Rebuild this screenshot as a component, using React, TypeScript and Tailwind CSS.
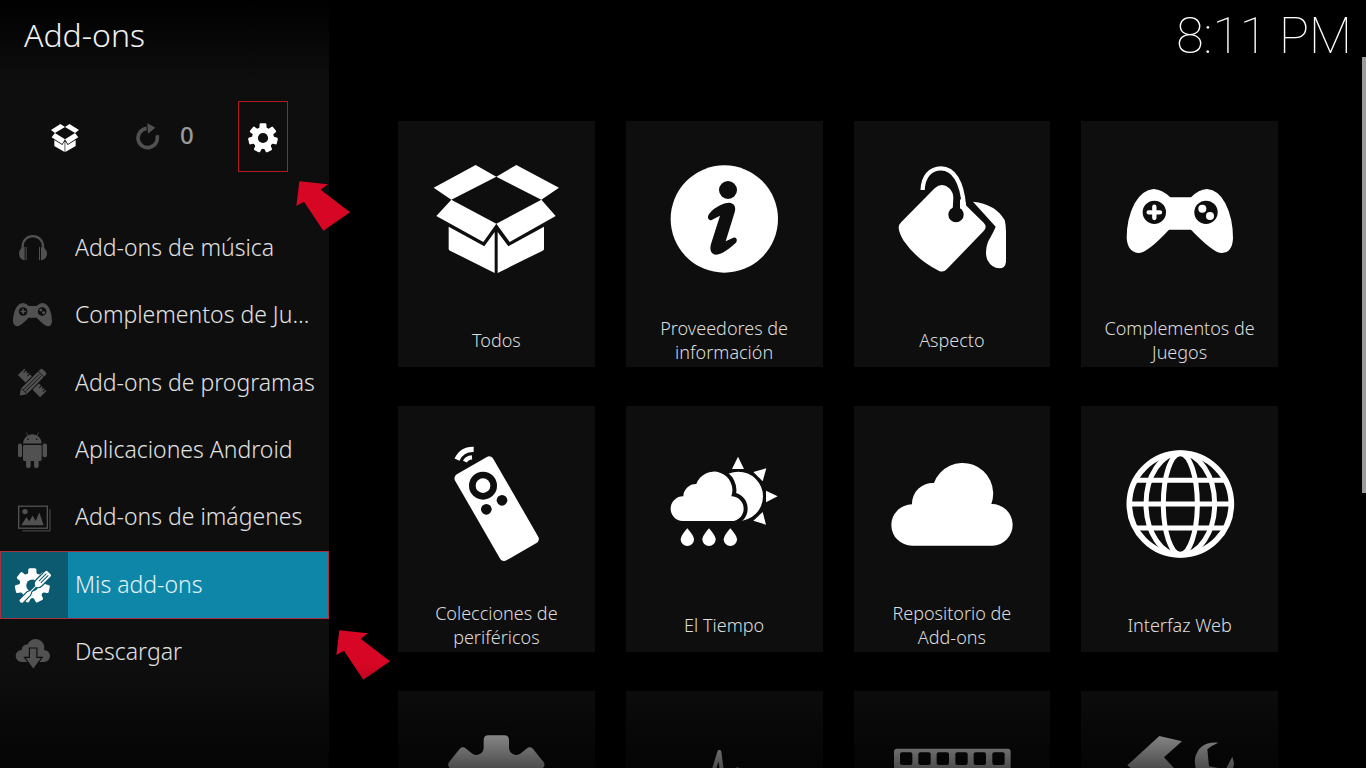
import type { ReactNode } from "react";

const PANEL = "#0e0e0e";

function Gear({ cx, cy, r, hole = PANEL }: { cx: number; cy: number; r: number; hole?: string }) {
  const scale = r / 161;
  return (
    <g transform={`translate(${cx} ${cy}) scale(${scale})`}>
      <circle r="116" />
      {[0, 1, 2, 3, 4, 5, 6].map((n) => (
        <path
          key={n}
          transform={`rotate(${(n * 360) / 7})`}
          d="M-38-146Q-38-161-24-161H24Q38-161 38-146V-122Q40-104 60-100V-60H-60V-100Q-40-104-38-122Z"
        />
      ))}
      <circle r="56" fill={hole} />
    </g>
  );
}

function BoxShape() {
  return (
    <g strokeLinejoin="round">
      <path d="M132 233 258 165 320 200 185 269ZM320 200 380 165 508 233 455 269ZM185 269 320 341 281 396 140 318ZM455 269 498 318 360 396 320 341Z" />
      <path d="M177 350 284 409 315 366V489L181 422Q177 420 177 416ZM324 366 356 409 463 350V416Q463 420 459 422L324 489Z" />
    </g>
  );
}

function GamepadShape() {
  return (
    <g>
      <path d="M250 237Q275 238 300 262H362Q385 238 410 237Q445 240 465 280Q488 325 488 385Q486 428 455 429Q430 430 362 359H296Q230 430 203 429Q172 425 169 385Q169 325 193 280Q215 240 250 237Z" />
      <g fill={PANEL}>
        <circle cx="252" cy="307" r="35" />
        <circle cx="407" cy="307" r="35" />
      </g>
      <path d="M235 307H269M252 290V324" stroke="currentColor" strokeWidth="13" strokeLinecap="round" />
      <circle cx="396" cy="296" r="12" />
      <circle cx="419" cy="318" r="12" />
    </g>
  );
}

type Tile = { label: string; view: string; icon: ReactNode };

const tiles: Tile[] = [
  { label: "Todos", view: "25 33 588 588", icon: <BoxShape /> },
  {
    label: "Proveedores de información",
    view: "18 33 588 588",
    icon: (
      <>
        <circle cx="313" cy="327" r="161" />
        <g fill={PANEL}>
          <circle cx="324" cy="240" r="27" />
          <path d="M264 322C264 306 300 279 327 278C343 279 349 291 344 307L317 394L340 383C350 380 354 392 347 399C332 413 306 434 289 434C273 434 268 420 273 402L300 317L275 330C269 332 264 328 264 322Z" />
        </g>
      </>
    ),
  },
  {
    label: "Aspecto",
    view: "26 33 588 588",
    icon: (
      <>
        <path d="M232 240C233 200 255 175 287 175C325 175 350 215 356 288" fill="none" stroke="currentColor" strokeWidth="13" />
        <path d="M160 352Q160 344 168 336L268 235Q290 215 312 235Q324 247 324 264L322 300H344V268L358 272L363 287L415 338Q427 350 415 363L305 477Q294 489 280 482Q215 450 175 392Q160 368 160 352Z" />
        <circle cx="332" cy="314" r="23" fill={PANEL} />
        <path d="M383 275Q450 282 478 330Q482 345 482 365V455Q480 475 462 475Q440 475 426 450Q417 425 428 395Q445 365 451 350Z" />
      </>
    ),
  },
  { label: "Complementos de Juegos", view: "35 33 588 588", icon: <GamepadShape /> },
  {
    label: "Colecciones de periféricos",
    view: "25 18 588 588",
    icon: (
      <>
        <rect x="255" y="177" width="132" height="298" rx="14" transform="rotate(-30 321 326)" />
        <circle cx="280" cy="257" r="42" fill={PANEL} />
        <circle cx="280" cy="257" r="22" />
        <circle cx="337" cy="301" r="16" fill={PANEL} />
        <circle cx="290" cy="328" r="16" fill={PANEL} />
        <g fill="none" stroke="currentColor">
          <path d="M202 179Q216 147 252 148" strokeWidth="16" />
          <path d="M226 185Q231 173 247 172" strokeWidth="13" />
        </g>
      </>
    ),
  },
  {
    label: "El Tiempo",
    view: "708 18 588 588",
    icon: (
      <>
        <circle cx="1045" cy="289" r="74" />
        <path
          d="M878 363A37 37 0 0 1 880 289A38 38 0 0 1 919 252A54 54 0 0 1 1024 289A37 37 0 0 1 1024 363Z"
          stroke={PANEL}
          strokeWidth="24"
          paintOrder="stroke"
        />
        <path d="M1044 170 1062 207H1026ZM1129 205 1118 244 1090 216ZM1128 272 1163 289 1128 307ZM1128 374 1090 362 1118 336Z" />
        {[892, 957, 1021].map((x) => (
          <path key={x} transform={`translate(${x} 0)`} d="M0 385Q-20 408-20 418A20 20 0 0 0 20 418Q20 408 0 385Z" />
        ))}
      </>
    ),
  },
  {
    label: "Repositorio de Add-ons",
    view: "26 18 588 588",
    icon: (
      <path d="M200 437A62 62 0 0 1 200 313A62 62 0 0 1 266 249A90 90 0 0 1 438 312A62 62 0 0 1 441 437Z" />
    ),
  },
  {
    label: "Interfaz Web",
    view: "709 18 588 588",
    icon: (
      <g fill="none" stroke="currentColor" strokeWidth="15">
        <circle cx="1004" cy="312" r="153" strokeWidth="17" />
        <ellipse cx="1004" cy="312" rx="51" ry="151" />
        <ellipse cx="1004" cy="312" rx="103" ry="153" />
        <path d="M868 241H1140M851 312H1157M868 384H1140" />
      </g>
    ),
  },
  { label: "Servicios", view: "25 33 588 588", icon: <Gear cx={320} cy={327} r={161} /> },
  {
    label: "Salud",
    view: "708 33 588 588",
    icon: (
      <path
        d="M850 340H950L988 216L1012 400L1043 268L1065 340H1160"
        fill="none"
        stroke="currentColor"
        strokeWidth="12"
        strokeLinejoin="round"
      />
    ),
  },
  {
    label: "Vídeo",
    view: "26 33 588 588",
    icon: (
      <>
        <rect x="146" y="206" width="350" height="240" rx="9" />
        {[164, 219, 274, 330, 385, 441].map((x) => (
          <g key={x} fill={PANEL}>
            <rect x={x} y="217" width="37" height="38" rx="6" />
            <rect x={x} y="397" width="37" height="38" rx="6" />
          </g>
        ))}
      </>
    ),
  },
  {
    label: "Herramientas",
    view: "709 33 588 588",
    icon: (
      <>
        <path d="M941 168 1009 184 955 232 1130 420 1095 450 900 300 845 256Z" />
        <path d="M1118 188Q1060 183 1048 235Q1045 265 1062 290L900 440 930 470 1100 310Q1160 300 1165 250L1160 230 1140 268 1090 259 1085 208Q1100 195 1118 188Z" />
      </>
    ),
  },
];

type Item = { label: string; view: string; icon: ReactNode; active?: boolean };

const items: Item[] = [
  {
    label: "Add-ons de música",
    view: "0 -18 204 201",
    icon: (
      <>
        <path d="M68 88V78A30 30 0 0 1 129 78V88" fill="none" stroke="currentColor" strokeWidth="7" />
        <path d="M74 80Q57 83 57 100Q57 117 74 120ZM77 80H80V120H77ZM123 80Q141 83 141 100Q141 117 123 120ZM117 80H120V120H117Z" />
      </>
    ),
  },
  {
    label: "Complementos de Juegos",
    view: "0 184 204 201",
    icon: (
      <g transform="translate(39 249) scale(.367) translate(-169 -237)">
        <GamepadShape />
      </g>
    ),
  },
  {
    label: "Add-ons de programas",
    view: "0 387 204 201",
    icon: (
      <>
        <g transform="rotate(45 97 488)">
          <rect x="50" y="475" width="94" height="27" />
          <path d="M56 474V484M64 474V480M72 474V484M122 474V484M130 474V480M138 474V484" stroke={PANEL} strokeWidth="3" />
        </g>
        <g transform="rotate(-45 97 488)">
          <path d="M43 488 61 476H142Q148 476 148 482V494Q148 500 142 500H61Z" stroke={PANEL} strokeWidth="6" paintOrder="stroke" />
          <path d="M64 484H130M64 492H130M134 476V500M62 477V499" stroke={PANEL} strokeWidth="2.5" />
        </g>
      </>
    ),
  },
  {
    label: "Aplicaciones Android",
    view: "0 -11 204 201",
    icon: (
      <>
        <path d="M69 71A28 28 0 0 1 125 71Z" />
        <path d="M79 38 86 50M116 38 109 50" stroke="currentColor" strokeWidth="2.5" />
        <rect x="69" y="75" width="56" height="48" rx="4" />
        <rect x="54" y="71" width="12" height="41" rx="6" />
        <rect x="128" y="71" width="13" height="41" rx="6" />
        <rect x="78" y="110" width="14" height="34" rx="6" />
        <rect x="102" y="110" width="14" height="34" rx="6" />
        <g fill={PANEL}>
          <circle cx="84" cy="58" r="2.5" />
          <circle cx="110" cy="58" r="2.5" />
        </g>
      </>
    ),
  },
  {
    label: "Add-ons de imágenes",
    view: "0 191 204 201",
    icon: (
      <>
        <rect x="56" y="257" width="86" height="66" fill="none" stroke="currentColor" strokeWidth="4" />
        <path d="M150 266V331H67" fill="none" stroke="currentColor" strokeWidth="3" />
        <circle cx="75" cy="273" r="8" />
        <path d="M64 314 79 290 88 302 98 285 107 301 118 276 131 314Z" />
      </>
    ),
  },
  {
    label: "Mis add-ons",
    view: "0 393 204 201",
    active: true,
    icon: (
      <>
        <Gear cx={97} cy={496} r={52} hole="#0c5a70" />
        <g transform="rotate(-45 104 501)">
          <path
            d="M44 496H78L88 500H108Q112 490 122 490H160Q165 490 165 494V508Q165 512 160 512H122Q112 512 108 503H88L78 508H44Q40 502 44 496Z"
            stroke="#0c5a70"
            strokeWidth="7"
            paintOrder="stroke"
          />
          <path d="M126 497H158M126 505H158" stroke="#0c5a70" strokeWidth="3" />
        </g>
      </>
    ),
  },
  {
    label: "Descargar",
    view: "0 596 204 201",
    icon: (
      <>
        <path d="M65 724A18 18 0 0 1 65 688A18 18 0 0 1 83 671A26 26 0 0 1 132 688A18 18 0 0 1 132 724Z" />
        <path d="M90 684H109V712H123L100 744 77 712H90Z" stroke={PANEL} strokeWidth="7" paintOrder="stroke" />
      </>
    ),
  },
];

function RedArrow({ className }: { className: string }) {
  return (
    <svg className={`pointer-events-none absolute z-20 h-[50px] w-[54px] ${className}`} viewBox="888 544 162 150" aria-hidden="true">
      <path fill="#d60624" d="M898 545 984 554 962 570 1050 638 970 693 912 606 889 619Z" />
    </svg>
  );
}

export default function App() {
  return (
    <div className="relative flex h-screen overflow-hidden bg-black font-['Noto_Sans',sans-serif] text-white">
      <aside className="relative z-10 flex w-[329px] shrink-0 flex-col bg-[#0e0e0e]">
        <div className="bg-linear-to-b from-black to-transparent pt-[15px] pb-7">
          <h1 className="pl-6 text-[32px] leading-10 font-light text-[#f0f0f0]">Add-ons</h1>
        </div>

        <div className="mt-[18px] flex h-[71px] items-center pl-[51px]">
          <button type="button" aria-label="Explorar add-ons" className="pt-0.5">
            <svg className="h-7 w-7" viewBox="132 165 376 324" preserveAspectRatio="none" fill="currentColor">
              <BoxShape />
            </svg>
          </button>
          <button type="button" aria-label="Actualizar" className="ml-14 flex items-center gap-5 text-[#505050]">
            <svg className="h-[27px] w-[25px]" viewBox="405 372 75 81" fill="none">
              <path d="M471 409A29 29 0 1 1 440 388" stroke="currentColor" strokeWidth="11" />
              <path d="M442 372 466 386 444 404Z" fill="currentColor" />
            </svg>
            <span className="pb-1 text-2xl leading-8 font-medium text-[#9a9a9a]">0</span>
          </button>
          <div className="relative ml-11">
            <button type="button" aria-label="Ajustes" className="flex h-[71px] w-[50px] items-center justify-center border border-[#b01c24] pt-0.5">
              <svg className="h-[30px] w-[30px]" viewBox="-45 -45 90 90" fill="currentColor">
                <Gear cx={0} cy={0} r={44} />
              </svg>
            </button>
            <RedArrow className="top-20 left-[58px]" />
          </div>
        </div>

        <nav className="mt-[42px] grid h-[472px] grid-cols-1 grid-rows-7">
          {items.map((item) => (
            <a
              key={item.label}
              href="#"
              aria-current={item.active ? "page" : undefined}
              className={
                item.active
                  ? "relative flex min-w-0 items-center bg-[#0e86a8] text-[#e4f4f8] outline -outline-offset-1 outline-[#a8303f]"
                  : "relative flex min-w-0 items-center text-[#e2e2e2]"
              }
            >
              <span className={item.active ? "h-full w-[68px] shrink-0 bg-[#0c5a70] text-white" : "h-full w-[68px] shrink-0 text-[#515151]"}>
                <svg className="h-full w-full" viewBox={item.view} fill="currentColor" aria-hidden="true">
                  {item.icon}
                </svg>
              </span>
              <span className="mr-2 ml-[7px] truncate pb-0.5 text-[23px] leading-8 font-light">{item.label}</span>
              {item.active && <RedArrow className="top-[79px] left-[336px]" />}
            </a>
          ))}
        </nav>
      </aside>

      <main className="flex min-w-0 flex-1 flex-col">
        <header className="flex justify-end pt-px pr-3.5">
          <time className="font-[Roboto,sans-serif] text-[50px] leading-[70px] font-thin">8:11 PM</time>
        </header>
        <div className="mt-[50px] grid grid-cols-4 gap-x-[31px] gap-y-[39px] pr-[88px] pl-[69px]">
          {tiles.map((tile, index) => (
            <a key={tile.label} href="#" aria-label={tile.label} className="flex h-[246px] flex-col items-center bg-[#0e0e0e]">
              <svg className="h-[196px] w-[196px] shrink-0" viewBox={tile.view} fill="currentColor" aria-hidden="true">
                {tile.icon}
              </svg>
              {index < 8 && (
                <span className="flex h-[46px] w-full items-center justify-center px-5 text-center text-lg leading-6 font-light text-[#dcdcdc]">
                  {tile.label}
                </span>
              )}
            </a>
          ))}
        </div>
      </main>

      <div className="absolute top-[57px] right-0 z-10 h-[436px] w-1 bg-[#9a9a9a]" />
      <div className="pointer-events-none absolute inset-x-0 bottom-0 z-10 h-[103px] bg-linear-to-b from-transparent to-black/70" />
    </div>
  );
}
